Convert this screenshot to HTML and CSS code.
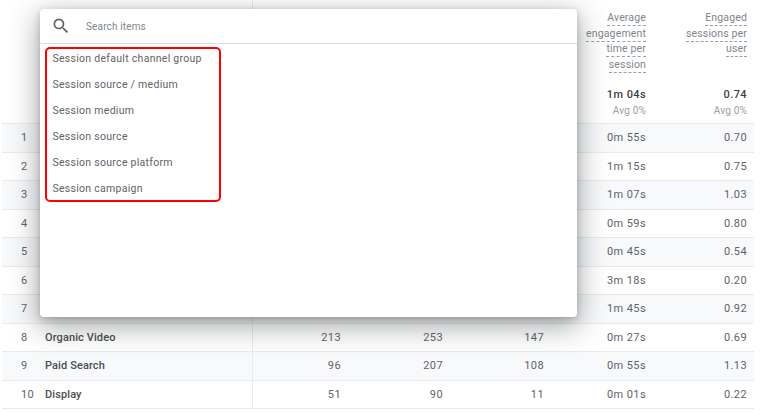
FILE: index.html
```html
<!DOCTYPE html>
<html lang="en">
<head>
    <meta charset="UTF-8">
    <title>Traffic acquisition</title>
    <link rel="stylesheet" href="styles.css">
</head>
<body>
    <div class="report">
        <div class="row head">
            <div class="cell idx"></div>
            <div class="cell label"></div>
            <div class="cell"></div>
            <div class="cell"></div>
            <div class="cell"></div>
            <div class="cell metric">
                <div class="metric-title"><span>Average</span><br><span>engagement</span><br><span>time per</span><br><span>session</span></div>
                <div class="total">1m 04s</div>
                <div class="avg">Avg 0%</div>
            </div>
            <div class="cell metric">
                <div class="metric-title"><span>Engaged</span><br><span>sessions per</span><br><span>user</span></div>
                <div class="total">0.74</div>
                <div class="avg">Avg 0%</div>
            </div>
        </div>

        <div class="row odd"><div class="cell idx">1</div><div class="cell label"></div><div class="cell"></div><div class="cell"></div><div class="cell"></div><div class="cell">0m 55s</div><div class="cell">0.70</div></div>
        <div class="row"><div class="cell idx">2</div><div class="cell label"></div><div class="cell"></div><div class="cell"></div><div class="cell"></div><div class="cell">1m 15s</div><div class="cell">0.75</div></div>
        <div class="row odd"><div class="cell idx">3</div><div class="cell label"></div><div class="cell"></div><div class="cell"></div><div class="cell"></div><div class="cell">1m 07s</div><div class="cell">1.03</div></div>
        <div class="row"><div class="cell idx">4</div><div class="cell label"></div><div class="cell"></div><div class="cell"></div><div class="cell"></div><div class="cell">0m 59s</div><div class="cell">0.80</div></div>
        <div class="row odd"><div class="cell idx">5</div><div class="cell label"></div><div class="cell"></div><div class="cell"></div><div class="cell"></div><div class="cell">0m 45s</div><div class="cell">0.54</div></div>
        <div class="row"><div class="cell idx">6</div><div class="cell label"></div><div class="cell"></div><div class="cell"></div><div class="cell"></div><div class="cell">3m 18s</div><div class="cell">0.20</div></div>
        <div class="row odd"><div class="cell idx">7</div><div class="cell label"></div><div class="cell"></div><div class="cell"></div><div class="cell"></div><div class="cell">1m 45s</div><div class="cell">0.92</div></div>
        <div class="row"><div class="cell idx">8</div><div class="cell label">Organic Video</div><div class="cell">213</div><div class="cell">253</div><div class="cell">147</div><div class="cell">0m 27s</div><div class="cell">0.69</div></div>
        <div class="row odd"><div class="cell idx">9</div><div class="cell label">Paid Search</div><div class="cell">96</div><div class="cell">207</div><div class="cell">108</div><div class="cell">0m 55s</div><div class="cell">1.13</div></div>
        <div class="row"><div class="cell idx">10</div><div class="cell label">Display</div><div class="cell">51</div><div class="cell">90</div><div class="cell">11</div><div class="cell">0m 01s</div><div class="cell">0.22</div></div>
    </div>

    <div class="picker">
        <div class="search">
            <svg class="search-icon" width="20" height="20" viewBox="0 0 24 24" fill="#5f6368">
                <path d="M15.5 14h-.79l-.28-.27A6.47 6.47 0 0 0 16 9.5 6.5 6.5 0 1 0 9.5 16c1.61 0 3.09-.59 4.23-1.57l.27.28v.79l5 4.99L20.49 19l-4.99-5zm-6 0C7.01 14 5 11.99 5 9.5S7.01 5 9.5 5 14 7.01 14 9.5 11.99 14 9.5 14z"/>
            </svg>
            <span class="search-text">Search items</span>
        </div>
        <ul class="items">
            <li>Session default channel group</li>
            <li>Session source / medium</li>
            <li>Session medium</li>
            <li>Session source</li>
            <li>Session source platform</li>
            <li>Session campaign</li>
        </ul>
    </div>
</body>
</html>
```

FILE: styles.css
```css
* {
    box-sizing: border-box;
}
body {
    margin: 0;
    height: 412px;
    overflow: hidden;
    background-color: #fff;
    font-family: Roboto, sans-serif;
    font-size: 11px;
    letter-spacing: 0.4px;
    color: #5f6368;
}
.report {
    margin-left: 2px;
    width: 752px;
    border-bottom: 1px solid #e8eaed;
}
.row {
    display: grid;
    grid-template-columns: 43px 208px 95px 102px 101px 102px 101px;
    height: 28.5px;
    border-top: 1px solid #e8eaed;
    line-height: 28px;
}
.row.head {
    height: 123px;
    border-top: none;
    line-height: normal;
}
.row.odd {
    background-color: #f8f9fa;
}
.cell {
    padding-right: 7px;
    text-align: right;
}
.cell.idx {
    padding: 0 0 0 19px;
    text-align: left;
}
.cell.label {
    padding: 0;
    text-align: left;
    font-weight: 500;
    letter-spacing: 0.1px;
    color: #4a4e52;
    border-right: 1px solid #e8eaed;
}
.metric {
    padding-top: 10px;
}
.metric-title {
    height: 77px;
    line-height: 15.5px;
    font-size: 10.5px;
    letter-spacing: 0.15px;
    color: #80868b;
}
.metric-title span {
    border-bottom: 1px dashed #9aa0a6;
    padding-bottom: 1px;
}
.total {
    font-weight: 500;
    color: #3c4043;
    line-height: 16px;
}
.avg {
    font-size: 10px;
    letter-spacing: 0.2px;
    line-height: 15px;
    color: #9aa0a6;
}
.picker {
    position: absolute;
    left: 40px;
    top: 9px;
    width: 537px;
    height: 308px;
    background-color: #fff;
    border-radius: 4px;
    box-shadow: 0 8px 28px 2px rgba(50, 54, 57, 0.42), 0 2px 6px rgba(60, 64, 67, 0.25);
}
.search {
    display: flex;
    align-items: center;
    height: 35px;
    padding-left: 11px;
    border-bottom: 1px solid #dadce0;
}
.search-icon {
    flex-shrink: 0;
}
.search-text {
    margin-left: 15px;
    font-size: 10px;
    letter-spacing: 0.15px;
    color: #80868b;
}
.items {
    list-style: none;
    width: 176px;
    height: 155px;
    margin: 3px 0 0 5px;
    padding: 2px 0 0 5.5px;
    border: 2px solid #f00;
    border-radius: 5px;
    font-size: 10.5px;
    letter-spacing: 0.28px;
}
.items li {
    height: 26px;
    line-height: 16px;
    color: #5f6368;
}
```
